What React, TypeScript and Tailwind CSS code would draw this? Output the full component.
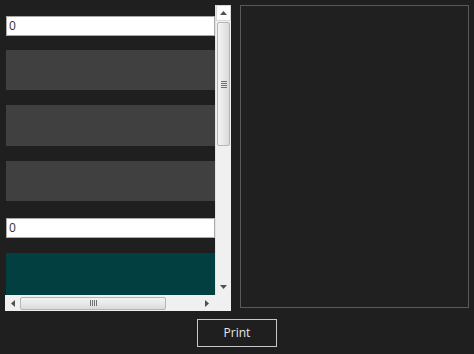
import React from 'react'

const font = { fontFamily: '"Segoe UI", "Open Sans", "Liberation Sans", sans-serif' }

function Arrow({ dir }: { dir: 'up' | 'down' | 'left' | 'right' }) {
  const pts = {
    up: '0,4 3.5,0 7,4',
    down: '0,0 3.5,4 7,0',
    left: '4,0 0,3.5 4,7',
    right: '0,0 4,3.5 0,7',
  }[dir]
  const vertical = dir === 'up' || dir === 'down'
  return (
    <svg width={vertical ? 7 : 4} height={vertical ? 4 : 7} viewBox={vertical ? '0 0 7 4' : '0 0 4 7'}>
      <polygon points={pts} fill="#505050" />
    </svg>
  )
}

function TextBox() {
  return (
    <div className="h-[20px] w-full bg-white border border-[#a9a9a9] flex items-center pl-[2px] text-[12px] text-[#333]">
      0
    </div>
  )
}

export default function App() {
  return (
    <div className="w-[474px] h-[354px] bg-[#1f1f1f] flex flex-col pt-[5px] overflow-hidden" style={font}>
      <div className="flex pl-[5px] gap-[9px]">
        {/* scroll panel */}
        <div className="w-[226px] h-[306px] grid grid-cols-[210px_16px] grid-rows-[290px_16px] bg-[#f0f0f0]">
          <div className="bg-[#1f1f1f] overflow-hidden pl-[1px] pt-[11px] flex flex-col">
            <TextBox />
            <div className="mt-[14px] h-[40px] bg-[#404040] shrink-0" />
            <div className="mt-[15px] h-[41px] bg-[#404040] shrink-0" />
            <div className="mt-[15px] h-[40px] bg-[#404040] shrink-0" />
            <div className="mt-[17px] shrink-0">
              <TextBox />
            </div>
            <div className="mt-[15px] h-[60px] bg-[#023f41] shrink-0" />
          </div>
          {/* vertical scrollbar */}
          <div className="bg-[#f0f0f0] border-l border-[#e3e3e3] flex flex-col items-center">
            <div className="h-[16px] w-full flex items-center justify-center bg-white border border-[#d9d9d9]">
              <Arrow dir="up" />
            </div>
            <div className="mt-[1px] w-[13px] h-[124px] rounded-[2px] border border-[#b5b5b5] bg-gradient-to-r from-[#f4f4f4] via-[#e8e8e8] to-[#dadada] flex items-center justify-center">
              <div className="flex flex-col gap-[1px]">
                <div className="w-[6px] h-[1px] bg-[#707070]" />
                <div className="w-[6px] h-[1px] bg-[#707070]" />
                <div className="w-[6px] h-[1px] bg-[#707070]" />
                <div className="w-[6px] h-[1px] bg-[#707070]" />
              </div>
            </div>
            <div className="flex-1" />
            <div className="h-[16px] w-full flex items-center justify-center">
              <Arrow dir="down" />
            </div>
          </div>
          {/* horizontal scrollbar */}
          <div className="bg-[#f0f0f0] flex items-center">
            <div className="w-[15px] h-full flex items-center justify-center">
              <Arrow dir="left" />
            </div>
            <div className="w-[146px] h-[13px] rounded-[2px] border border-[#b5b5b5] bg-gradient-to-b from-[#f4f4f4] via-[#e8e8e8] to-[#dadada] flex items-center justify-center">
              <div className="flex gap-[1px]">
                <div className="w-[1px] h-[6px] bg-[#707070]" />
                <div className="w-[1px] h-[6px] bg-[#707070]" />
                <div className="w-[1px] h-[6px] bg-[#707070]" />
                <div className="w-[1px] h-[6px] bg-[#707070]" />
              </div>
            </div>
            <div className="flex-1" />
            <div className="w-[16px] h-full flex items-center justify-center">
              <Arrow dir="right" />
            </div>
          </div>
          <div className="bg-[#f0f0f0]" />
        </div>
        {/* preview panel */}
        <div className="w-[229px] h-[303px] border border-[#5a5a5a] bg-[#202020]" />
      </div>
      <div className="mt-[8px] flex justify-center">
        <button className="w-[80px] h-[28px] border border-[#c8c8c8] text-[12px] text-[#e6e6e6] flex items-center justify-center">
          Print
        </button>
      </div>
    </div>
  )
}
